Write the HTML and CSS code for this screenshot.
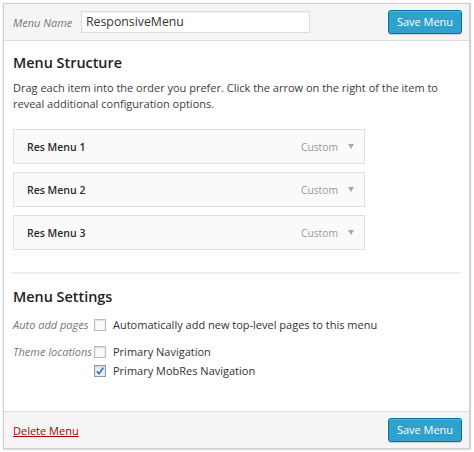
FILE: index.html
```html
<!DOCTYPE html>
<html>
<head>
<meta charset="utf-8">
<link rel="stylesheet" href="styles.css">
</head>
<body>
<div class="panel">
  <div class="header">
    <label class="name-label">Menu Name</label>
    <div class="name-input">ResponsiveMenu</div>
    <button class="btn">Save Menu</button>
  </div>
  <div class="body">
    <h3 class="title">Menu Structure</h3>
    <p class="desc">Drag each item into the order you prefer. Click the arrow on the right of the item to reveal additional configuration options.</p>
    <ul class="items">
      <li class="item"><span class="item-title">Res Menu 1</span><span class="item-type">Custom</span><span class="arrow"></span></li>
      <li class="item"><span class="item-title">Res Menu 2</span><span class="item-type">Custom</span><span class="arrow"></span></li>
      <li class="item"><span class="item-title">Res Menu 3</span><span class="item-type">Custom</span><span class="arrow"></span></li>
    </ul>
    <div class="divider"></div>
    <h3 class="title settings-title">Menu Settings</h3>
    <div class="settings">
      <div class="set-label">Auto add pages</div>
      <div class="set-opts">
        <div class="opt"><span class="cb"></span>Automatically add new top-level pages to this menu</div>
      </div>
      <div class="set-label">Theme locations</div>
      <div class="set-opts">
        <div class="opt"><span class="cb"></span>Primary Navigation</div>
        <div class="opt"><span class="cb checked"><svg width="10" height="10" viewBox="0 0 10 10"><path d="M1.8 5.2 L4 7.6 L8.4 1.8" fill="none" stroke="#1e6fae" stroke-width="1.5"/></svg></span>Primary MobRes Navigation</div>
      </div>
    </div>
  </div>
  <div class="footer">
    <a class="delete" href="#">Delete Menu</a>
    <button class="btn">Save Menu</button>
  </div>
</div>
</body>
</html>
```

FILE: styles.css
```css
* { box-sizing: border-box; }
html, body { margin: 0; padding: 0; background: #fff; }
body {
  font-family: "Open Sans", "Liberation Sans", sans-serif;
  font-size: 11px;
  color: #444;
  width: 474px;
  height: 452px;
  padding: 3px 4px 3px 3px;
}
.panel {
  width: 467px;
  height: 446px;
  border: 1px solid #cfcfcf;
  box-shadow: 0 1px 2px rgba(0,0,0,0.15), 1px 0 1px rgba(0,0,0,0.12);
  display: flex;
  flex-direction: column;
  background: #fff;
}
.header {
  height: 37px;
  background: #f5f5f5;
  border-bottom: 1px solid #dedede;
  display: flex;
  align-items: center;
  padding: 0 7px 0 9px;
}
.name-label {
  font-style: italic;
  color: #777;
  width: 68px;
  font-size: 11px;
  white-space: nowrap;
}
.name-input {
  width: 229px;
  height: 22px;
  border: 1px solid #ddd;
  background: #fff;
  box-shadow: inset 0 1px 2px rgba(0,0,0,0.07);
  font-size: 12.3px;
  color: #333;
  line-height: 20px;
  padding-left: 4px;
}
.btn {
  margin-left: auto;
  height: 24px;
  width: 74px;
  padding: 0;
  background: #2ea2cc;
  border: 1px solid #0074a2;
  border-radius: 3px;
  color: #fff;
  font-family: "Open Sans", "Liberation Sans", sans-serif;
  font-size: 11px;
  line-height: 22px;
  box-shadow: inset 0 1px 0 rgba(120,200,230,0.5), 0 1px 0 rgba(0,0,0,0.15);
}
.body {
  flex: 1;
  padding: 10px 8px 0 9px;
}
.title {
  margin: 0;
  font-size: 14.4px;
  font-weight: 600;
  color: #222;
  line-height: 24px;
}
.desc {
  margin: 5px 0 0;
  line-height: 16px;
  color: #3c3c3c;
  font-size: 11px;
}
.items {
  list-style: none;
  margin: 17px 0 0;
  padding: 0;
  width: 352px;
  display: flex;
  flex-direction: column;
  gap: 8px;
}
.item {
  height: 35px;
  border: 1px solid #dfdfdf;
  background: #fafafa;
  display: flex;
  align-items: center;
  padding: 0 10px 0 13px;
}
.item-title {
  font-weight: 600;
  color: #2a2a2a;
  font-size: 10.5px;
}
.item-type {
  margin-left: auto;
  color: #999;
  font-size: 10.3px;
  margin-right: 10px;
}
.arrow {
  width: 0;
  height: 0;
  border-left: 3.5px solid transparent;
  border-right: 3.5px solid transparent;
  border-top: 5px solid #aaa;
}
.divider {
  margin-top: 22px;
  height: 2px;
  background: #eee;
  margin-left: -2px;
}
.settings-title {
  margin-top: 11px;
}
.settings {
  margin-top: 6px;
  display: grid;
  grid-template-columns: 81px 1fr;
  row-gap: 8px;
}
.set-label {
  font-style: italic;
  color: #777;
  line-height: 19px;
  font-size: 11px;
  white-space: nowrap;
}
.opt {
  display: flex;
  align-items: center;
  line-height: 19px;
  color: #333;
  font-size: 11px;
}
.cb {
  width: 12px;
  height: 12px;
  border: 1px solid #bbb;
  background: #fafafa;
  box-shadow: inset 0 1px 2px rgba(0,0,0,0.12);
  margin-right: 7px;
  display: inline-flex;
  align-items: center;
  justify-content: center;
  flex: none;
}
.cb.checked { border-color: #8a9bb0; background: #e8eef6; }
.footer {
  height: 37px;
  background: #f5f5f5;
  border-top: 1px solid #dedede;
  display: flex;
  align-items: center;
  padding: 0 7px 0 9px;
}
.delete {
  color: #a00;
  text-decoration: underline;
  font-size: 11px;
}
```
